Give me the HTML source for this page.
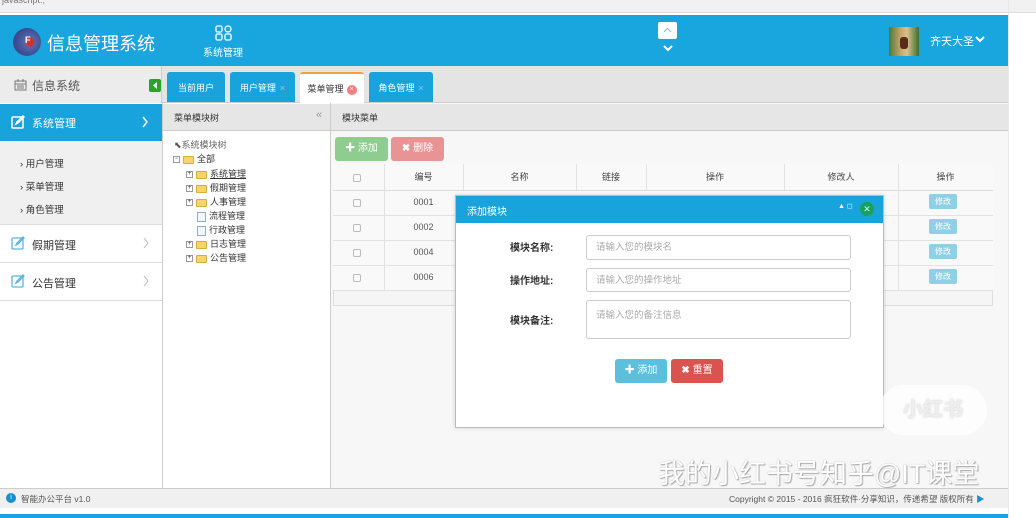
<!DOCTYPE html>
<html><head><meta charset="utf-8"><style>
*{margin:0;padding:0;box-sizing:border-box}
body{width:1036px;height:518px;position:relative;overflow:hidden;background:#fff;font-family:"Liberation Sans","Noto Sans CJK SC",sans-serif;font-size:10px;color:#333}
.a{position:absolute}
.tab{position:absolute;top:72px;height:30px;background:#19a3dc;color:#fff;font-size:9px;line-height:32px;text-align:center;border-radius:3px 3px 0 0}
.tab i{font-style:normal;color:#8fd0ee;margin-left:4px}
.th{position:absolute;top:165px;height:25px;line-height:25px;text-align:center;font-size:9px;color:#444}
.cb{position:absolute;width:8px;height:8px;border:1px solid #bbb;border-radius:2px;background:#fafafa;left:353px}
.mod{position:absolute;left:929px;width:28px;height:15px;background:#8fd0e6;color:#fff;font-size:8px;line-height:15px;text-align:center;border-radius:2px}
.tree{position:absolute;font-size:9px;color:#333;line-height:12px}
.fold{display:inline-block;width:11px;height:8px;background:#f5d56a;border:1px solid #d7ae3b;border-radius:1px;vertical-align:middle;margin:0 3px}
.pl{display:inline-block;width:7px;height:7px;border:1px solid #999;font-size:6px;line-height:5px;text-align:center;vertical-align:middle;background:#fff}
.doc{display:inline-block;width:9px;height:10px;border:1px solid #9ab;background:#f3f6fb;vertical-align:middle;margin:0 3px 0 4px}
.inp{position:absolute;left:586px;width:265px;border:1px solid #ccc;border-radius:3px;background:#fff;color:#aaa;font-size:9.5px;padding-left:9px}
.lbl{position:absolute;left:510px;font-size:10px;font-weight:bold;color:#333}
</style></head><body>
<div class="a" style="left:0;top:0;width:1036px;height:13px;background:#f1f1f1;border-bottom:1px solid #ddd"><span style="font-size:9px;color:#777;position:relative;top:-5px;left:2px">javascript:;</span></div>
<div class="a" style="left:1008px;top:0;width:1px;height:518px;background:#e8e8e8"></div>
<!-- header -->
<div class="a" style="left:0;top:15px;width:1008px;height:51px;background:#19a5de"></div>
<div class="a" style="left:13px;top:28px;width:28px;height:28px;border-radius:50%;background:radial-gradient(circle at 60% 50%,#c33 0,#c33 4px,#5566aa 5px,#3a4c8f 14px)"></div>
<div class="a" style="left:25px;top:35px;color:#fff;font-size:9px;font-weight:bold">F</div>
<div class="a" style="left:47px;top:30px;color:#fff;font-size:18px">信息管理系统</div>
<svg class="a" style="left:214px;top:24px" width="20" height="18" viewBox="0 0 20 18" fill="none" stroke="#fff" stroke-width="1.3"><rect x="2" y="2" width="6" height="6" rx="1.5"/><rect x="11" y="2" width="6" height="6" rx="3" transform="rotate(45 14 5)"/><rect x="2" y="10" width="6" height="6" rx="1.5"/><rect x="11" y="10" width="6" height="6" rx="1.5"/></svg>
<div class="a" style="left:203px;top:44px;color:#fff;font-size:10px">系统管理</div>
<div class="a" style="left:658px;top:22px;width:19px;height:17px;background:#fff;border-radius:2px"></div>
<svg class="a" style="left:661px;top:25px" width="13" height="10"><path d="M3 7 L6.5 3.5 L10 7" stroke="#9bc" fill="none" stroke-width="1.2"/></svg>
<svg class="a" style="left:662px;top:44px" width="12" height="8"><path d="M2 2 L6 6 L10 2" stroke="#fff" fill="none" stroke-width="2"/></svg>
<div class="a" style="left:889px;top:27px;width:30px;height:29px;background:linear-gradient(90deg,#4a7a3a,#c9a86a 40%,#d9c08a 60%,#3e6e34)"></div>
<div class="a" style="left:900px;top:37px;width:8px;height:12px;background:#5a2a1f;border-radius:3px"></div>
<div class="a" style="left:930px;top:33px;color:#fff;font-size:11px">齐天大圣</div>
<svg class="a" style="left:974px;top:35px" width="12" height="9"><path d="M2 2 L6 6 L10 2" stroke="#fff" fill="none" stroke-width="2"/></svg>
<!-- tabs row -->
<div class="a" style="left:0;top:66px;width:1008px;height:37px;background:#e4e4e4;border-bottom:1px solid #ccc"></div>
<div class="a" style="left:0;top:66px;width:162px;height:37px;background:#ececec;border-right:1px solid #ccc"></div>
<svg class="a" style="left:14px;top:79px" width="13" height="12" fill="none" stroke="#777"><rect x="1" y="2" width="11" height="9"/><path d="M1 5h11M4 0v3M9 0v3M3 7h7M3 9h7"/></svg>
<div class="a" style="left:32px;top:77px;font-size:12px;color:#555">信息系统</div>
<div class="a" style="left:149px;top:79px;width:12px;height:13px;background:#2aa32a;border-radius:2px"></div>
<svg class="a" style="left:152px;top:82px" width="6" height="7"><path d="M5 0 L1 3.5 L5 7Z" fill="#fff"/></svg>
<div class="tab" style="left:167px;width:58px">当前用户</div>
<div class="tab" style="left:230px;width:65px">用户管理<i>×</i></div>
<div class="tab" style="left:300px;width:64px;background:#fff;color:#333;border-top:2px solid #f0a040;line-height:30px;height:31px">菜单管理<span style="display:inline-block;width:10px;height:10px;border-radius:50%;background:#f08080;margin-left:3px;vertical-align:middle;color:#fff;font-size:7px;line-height:10px">×</span></div>
<div class="tab" style="left:369px;width:64px">角色管理<i>×</i></div>
<!-- left menu -->
<div class="a" style="left:0;top:103px;width:163px;height:385px;background:#fff;border-right:1px solid #ccc"></div>
<div class="a" style="left:0;top:104px;width:162px;height:37px;background:#19a3dc"></div>
<svg class="a" style="left:11px;top:115px" width="14" height="14" fill="none" stroke="#fff" stroke-width="1.5"><rect x="1" y="2" width="11" height="11" rx="1"/><path d="M5 9 L6 7 L12 1 L13 2 L7 8Z"/></svg>
<div class="a" style="left:32px;top:115px;color:#fff;font-size:11px">系统管理</div>
<svg class="a" style="left:141px;top:116px" width="8" height="12"><path d="M2 1 L6 6 L2 11" stroke="#fff" fill="none" stroke-width="1.5"/></svg>
<div class="a" style="left:0;top:141px;width:162px;height:84px;background:#f0f0f0;border-bottom:1px solid #ddd"></div>
<div class="a" style="left:20px;top:153px;font-size:9.5px;line-height:23px;color:#333">› 用户管理<br>› 菜单管理<br>› 角色管理</div>
<svg class="a" style="left:11px;top:236px" width="14" height="14" fill="none" stroke="#5ab6e0" stroke-width="1.3"><rect x="1" y="2" width="11" height="11" rx="1"/><path d="M5 9 L6 7 L12 1 L13 2 L7 8Z"/></svg>
<div class="a" style="left:32px;top:237px;font-size:11px">假期管理</div>
<svg class="a" style="left:142px;top:237px" width="8" height="12"><path d="M2 1 L6 6 L2 11" stroke="#bbb" fill="none" stroke-width="1"/></svg>
<div class="a" style="left:0;top:262px;width:162px;height:1px;background:#ddd"></div>
<svg class="a" style="left:11px;top:274px" width="14" height="14" fill="none" stroke="#5ab6e0" stroke-width="1.3"><rect x="1" y="2" width="11" height="11" rx="1"/><path d="M5 9 L6 7 L12 1 L13 2 L7 8Z"/></svg>
<div class="a" style="left:32px;top:275px;font-size:11px">公告管理</div>
<svg class="a" style="left:142px;top:275px" width="8" height="12"><path d="M2 1 L6 6 L2 11" stroke="#bbb" fill="none" stroke-width="1"/></svg>
<div class="a" style="left:0;top:300px;width:162px;height:1px;background:#ddd"></div>
<!-- tree panel -->
<div class="a" style="left:163px;top:103px;width:168px;height:385px;background:#fff;border-right:1px solid #ccc"></div>
<div class="a" style="left:163px;top:104px;width:167px;height:27px;background:#e6e6e6;border-bottom:1px solid #ccc"></div>
<div class="a" style="left:174px;top:111px;font-size:9px">菜单模块树</div>
<div class="a" style="left:316px;top:109px;font-size:11px;color:#999">«</div>
<div class="tree" style="left:174px;top:139px"><span style="color:#555">⬉</span><span style="color:#666">系统模块树</span></div>
<div class="tree" style="left:173px;top:153px"><span class="pl">−</span><span class="fold"></span>全部</div>
<div class="tree" style="left:186px;top:167px;line-height:14px">
<div><span class="pl">+</span><span class="fold"></span><u>系统管理</u></div>
<div><span class="pl">+</span><span class="fold"></span>假期管理</div>
<div><span class="pl">+</span><span class="fold"></span>人事管理</div>
<div><span style="display:inline-block;width:7px"></span><span class="doc"></span>流程管理</div>
<div><span style="display:inline-block;width:7px"></span><span class="doc"></span>行政管理</div>
<div><span class="pl">+</span><span class="fold"></span>日志管理</div>
<div><span class="pl">+</span><span class="fold"></span>公告管理</div></div>
<!-- main -->
<div class="a" style="left:331px;top:103px;width:677px;height:385px;background:#f7f7f7"></div>
<div class="a" style="left:331px;top:104px;width:677px;height:27px;background:#e6e6e6;border-bottom:1px solid #ccc"></div>
<div class="a" style="left:342px;top:111px;font-size:9px">模块菜单</div>
<div class="a" style="left:335px;top:137px;width:53px;height:24px;background:#8fcc8f;border-radius:3px;color:#fff;font-size:10px;line-height:24px;text-align:center"><b>✚</b> 添加</div>
<div class="a" style="left:391px;top:137px;width:53px;height:24px;background:#e89494;border-radius:3px;color:#fff;font-size:10px;line-height:24px;text-align:center"><b>✖</b> 删除</div>
<div class="a" style="left:333px;top:164px;width:660px;height:142px;border:1px solid #ddd;background:#f5f5f5"></div>
<div class="a" style="left:333px;top:164px;width:660px;height:126px;background:#f9f9f9"></div>
<div class="a" style="left:333px;top:190px;width:660px;height:1px;background:#ddd"></div>
<div class="a" style="left:333px;top:215px;width:660px;height:1px;background:#e2e2e2"></div>
<div class="a" style="left:333px;top:240px;width:660px;height:1px;background:#e2e2e2"></div>
<div class="a" style="left:333px;top:265px;width:660px;height:1px;background:#e2e2e2"></div>
<div class="a" style="left:333px;top:290px;width:660px;height:1px;background:#e2e2e2"></div>
<div class="a" style="left:384px;top:164px;width:1px;height:126px;background:#e2e2e2"></div>
<div class="a" style="left:463px;top:164px;width:1px;height:26px;background:#e2e2e2"></div>
<div class="a" style="left:576px;top:164px;width:1px;height:26px;background:#e2e2e2"></div>
<div class="a" style="left:646px;top:164px;width:1px;height:26px;background:#e2e2e2"></div>
<div class="a" style="left:784px;top:164px;width:1px;height:26px;background:#e2e2e2"></div>
<div class="a" style="left:898px;top:164px;width:1px;height:126px;background:#e2e2e2"></div>
<div class="cb" style="top:174px"></div><div class="cb" style="top:199px"></div><div class="cb" style="top:224px"></div><div class="cb" style="top:249px"></div><div class="cb" style="top:274px"></div>
<div class="th" style="left:384px;width:79px">编号</div>
<div class="th" style="left:463px;width:113px">名称</div>
<div class="th" style="left:576px;width:70px">链接</div>
<div class="th" style="left:646px;width:138px">操作</div>
<div class="th" style="left:784px;width:114px">修改人</div>
<div class="th" style="left:898px;width:95px">操作</div>
<div class="a" style="left:384px;top:190px;width:79px;font-size:9px;color:#555;text-align:center;line-height:25px">0001<br>0002<br>0004<br>0006</div>
<div class="mod" style="top:194px">修改</div><div class="mod" style="top:219px">修改</div><div class="mod" style="top:244px">修改</div><div class="mod" style="top:269px">修改</div>
<!-- dialog -->
<div class="a" style="left:455px;top:195px;width:429px;height:233px;background:#fff;border:1px solid #bbb;box-shadow:0 0 4px rgba(0,0,0,.15)"></div>
<div class="a" style="left:456px;top:196px;width:427px;height:27px;background:#19a3dc"></div>
<div class="a" style="left:467px;top:203px;color:#fff;font-size:10px">添加模块</div>
<div class="a" style="left:838px;top:202px;color:#fff;font-size:7px">▲ ◻</div>
<div class="a" style="left:860px;top:202px;width:14px;height:14px;border-radius:50%;background:#1aa05a;color:#bfe;font-size:9px;line-height:14px;text-align:center">✕</div>
<div class="lbl" style="top:239px">模块名称:</div>
<div class="lbl" style="top:272px">操作地址:</div>
<div class="lbl" style="top:312px">模块备注:</div>
<div class="inp" style="top:235px;height:25px;line-height:24px">请输入您的模块名</div>
<div class="inp" style="top:268px;height:24px;line-height:23px">请输入您的操作地址</div>
<div class="inp" style="top:300px;height:39px;padding-top:6px">请输入您的备注信息</div>
<div class="a" style="left:615px;top:359px;width:52px;height:24px;background:#5bc0de;border-radius:3px;color:#fff;font-size:10px;line-height:24px;text-align:center"><b>✚</b> 添加</div>
<div class="a" style="left:671px;top:359px;width:52px;height:24px;background:#d9534f;border-radius:3px;color:#fff;font-size:10px;line-height:24px;text-align:center"><b>✖</b> 重置</div>
<!-- watermarks -->
<div class="a" style="left:879px;top:385px;width:108px;height:50px;border-radius:25px;background:rgba(255,255,255,.7);color:#eee;font-size:20px;font-weight:bold;line-height:50px;text-align:center;text-shadow:0 0 2px #ccc">小红书</div>
<div class="a" style="left:658px;top:452px;font-size:27px;color:#fff;white-space:nowrap;text-shadow:0 0 1px #999,1px 1px 1px #aaa">我的小红书号知乎@IT课堂</div>
<!-- footer -->
<div class="a" style="left:0;top:488px;width:1008px;height:20px;background:#f0f0f0;border-top:1px solid #ccc"></div>
<div class="a" style="left:6px;top:493px;width:10px;height:10px;border-radius:50%;background:#1a8fd0;color:#fff;font-size:7px;line-height:10px;text-align:center">i</div>
<div class="a" style="left:21px;top:493px;font-size:8.5px;color:#555">智能办公平台 v1.0</div>
<div class="a" style="left:729px;top:493px;font-size:8.5px;color:#555">Copyright © 2015 - 2016 疯狂软件·分享知识，传递希望 版权所有 <span style="color:#1a8fd0">▶</span></div>
<div class="a" style="left:0;top:514px;width:1008px;height:4px;background:#19a3dc"></div>
</body></html>
